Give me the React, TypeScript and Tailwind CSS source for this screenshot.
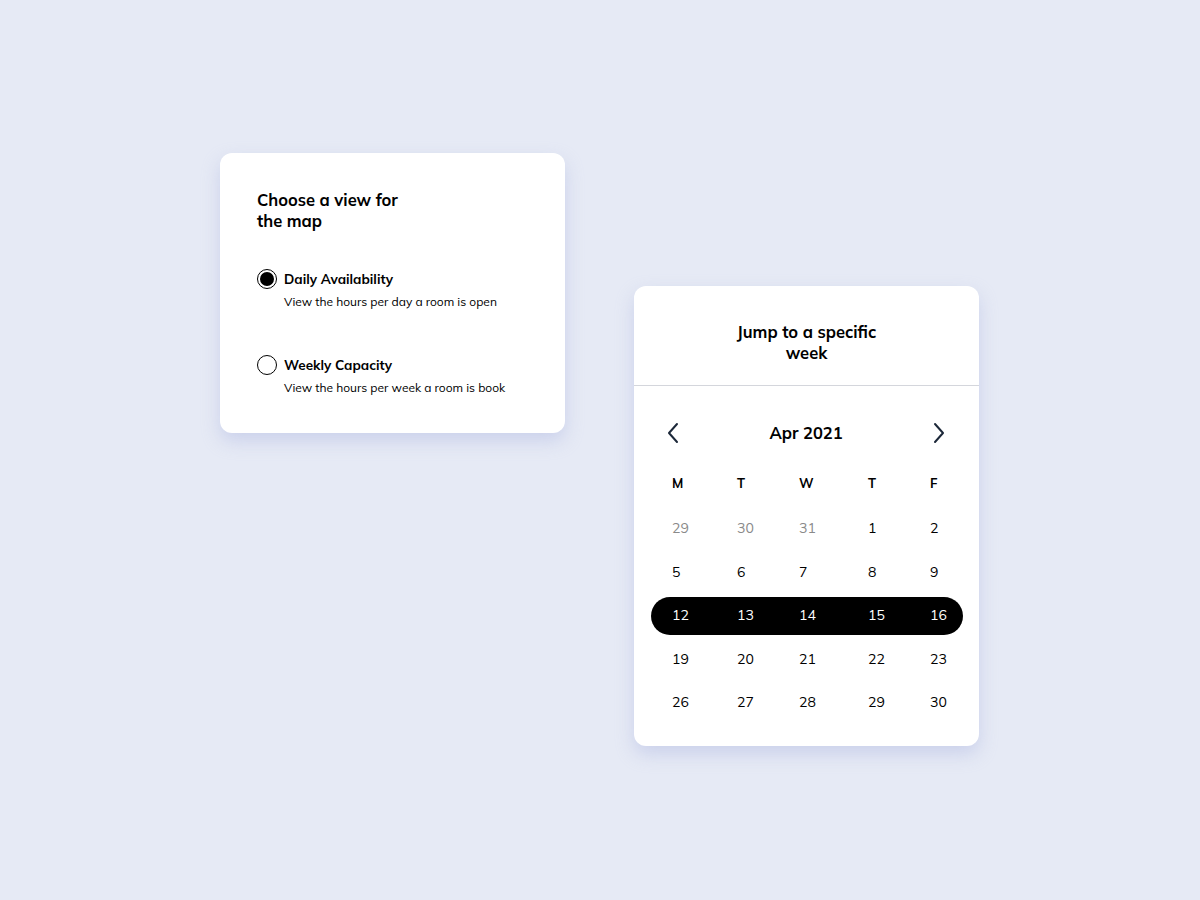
import React from "react";

const font = { fontFamily: "Mulish, Lato, 'Noto Sans', sans-serif" };

function Radio({ checked }: { checked: boolean }) {
  return (
    <span className="flex h-[20px] w-[20px] shrink-0 items-center justify-center rounded-full border-[1.5px] border-black bg-white">
      {checked && <span className="h-[14px] w-[14px] rounded-full bg-black" />}
    </span>
  );
}

function Option({ checked, title, desc }: { checked: boolean; title: string; desc: string }) {
  return (
    <div>
      <div className="flex items-center gap-[7px]">
        <Radio checked={checked} />
        <span className="text-[13.5px] font-bold leading-[20px] text-black">{title}</span>
      </div>
      <div className="mt-[4px] pl-[27px] text-[12px] leading-[18px] text-black">{desc}</div>
    </div>
  );
}

const rows: { n: number; muted?: boolean }[][] = [
  [{ n: 29, muted: true }, { n: 30, muted: true }, { n: 31, muted: true }, { n: 1 }, { n: 2 }],
  [{ n: 5 }, { n: 6 }, { n: 7 }, { n: 8 }, { n: 9 }],
  [{ n: 12 }, { n: 13 }, { n: 14 }, { n: 15 }, { n: 16 }],
  [{ n: 19 }, { n: 20 }, { n: 21 }, { n: 22 }, { n: 23 }],
  [{ n: 26 }, { n: 27 }, { n: 28 }, { n: 29 }, { n: 30 }],
];

const cols = "grid grid-cols-[65px_62px_69px_62px_1fr] pl-[21px]";

export default function App() {
  return (
    <div className="relative h-[900px] w-[1200px] bg-[#e6eaf5]" style={font}>
      <div className="flex gap-[69px] pl-[220px] pt-[153px]">
        <div className="h-[280px] w-[345px] rounded-[12px] bg-white px-[37px] pt-[36px] shadow-[0_8px_18px_rgba(170,180,225,0.45)]">
          <h2 className="text-[16.5px] font-bold leading-[21px] text-black">
            Choose a view for
            <br />
            the map
          </h2>
          <div className="mt-[38px] flex flex-col gap-[44px]">
            <Option checked title="Daily Availability" desc="View the hours per day a room is open" />
            <Option checked={false} title="Weekly Capacity" desc="View the hours per week a room is book" />
          </div>
        </div>

        <div className="mt-[133px] h-[460px] w-[345px] rounded-[12px] bg-white shadow-[0_8px_18px_rgba(170,180,225,0.45)]">
          <div className="flex h-[100px] items-center justify-center border-b border-[#d4d6dc] pt-[13px] text-center text-[16.5px] font-bold leading-[21px] text-black">
            <div>
              Jump to a specific
              <br />
              week
            </div>
          </div>
          <div className="mt-[35px] flex items-center justify-between pl-[32px] pr-[33px]">
            <svg width="14" height="22" viewBox="0 0 14 22" fill="none">
              <path d="M11 2 L3 11 L11 20" stroke="#1c2839" strokeWidth="2" strokeLinecap="round" strokeLinejoin="round" />
            </svg>
            <span className="text-[16.5px] font-bold leading-[24px] text-black">Apr 2021</span>
            <svg width="14" height="22" viewBox="0 0 14 22" fill="none">
              <path d="M3 2 L11 11 L3 20" stroke="#1c2839" strokeWidth="2" strokeLinecap="round" strokeLinejoin="round" />
            </svg>
          </div>
          <div className="mt-[27px] pl-[17px] pr-[16px]">
            <div className={`${cols} h-[24px] items-center text-[13px] font-bold text-black`}>
              {["M", "T", "W", "T", "F"].map((d, i) => (
                <div key={i}>{d}</div>
              ))}
            </div>
            <div className="mt-[14px] flex flex-col gap-[6px]">
              {rows.map((r, ri) => {
                const sel = ri === 2;
                return (
                  <div
                    key={ri}
                    className={`${cols} h-[37.5px] items-center text-[14px] ${
                      sel ? "rounded-full bg-black text-white" : "text-black"
                    }`}
                  >
                    {r.map((c, ci) => (
                      <div key={ci} className={c.muted ? "text-[#8a8a8a]" : ""}>
                        {c.n}
                      </div>
                    ))}
                  </div>
                );
              })}
            </div>
          </div>
        </div>
      </div>
    </div>
  );
}
